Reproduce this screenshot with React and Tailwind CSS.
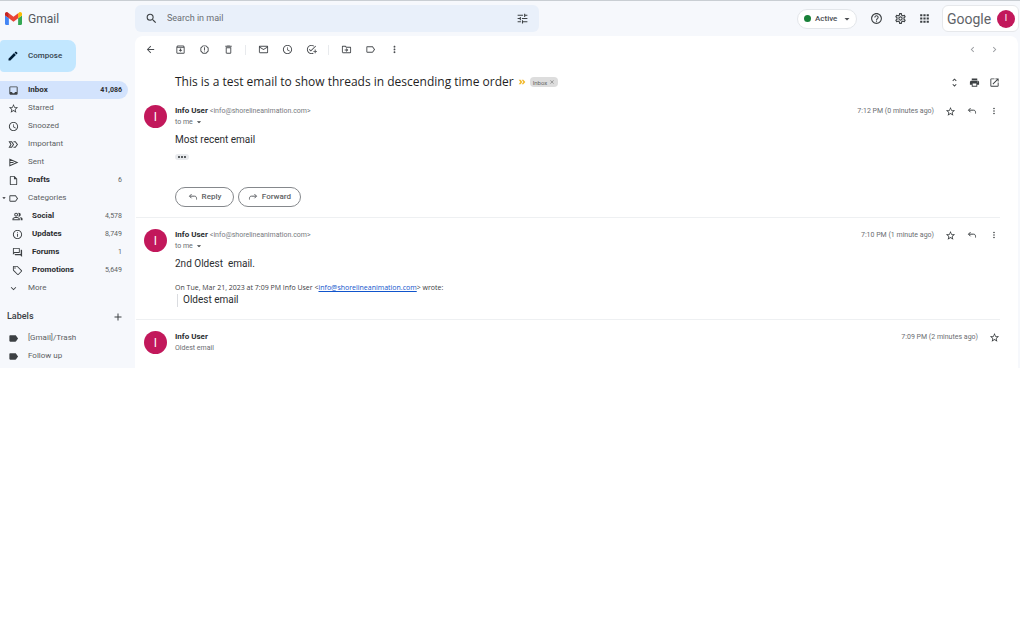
import React from "react";
import {
  MdAdd,
  MdApps,
  MdArrowBack,
  MdArrowDropDown,
  MdArrowRight,
  MdChevronLeft,
  MdChevronRight,
  MdClose,
  MdEdit,
  MdExpandMore,
  MdHelpOutline,
  MdInbox,
  MdInfoOutline,
  MdLabel,
  MdLabelOutline,
  MdMailOutline,
  MdMoreHoriz,
  MdMoreVert,
  MdOpenInNew,
  MdOutlineAddTask,
  MdOutlineArchive,
  MdOutlineDelete,
  MdOutlineDriveFileMove,
  MdOutlineForum,
  MdOutlineInsertDriveFile,
  MdOutlineLocalOffer,
  MdOutlinePeopleAlt,
  MdOutlineReport,
  MdOutlineSettings,
  MdPrint,
  MdSchedule,
  MdSearch,
  MdStarBorder,
  MdTune,
  MdUnfoldMore,
} from "react-icons/md";

const ImportantIcon = ({ className = "" }) => (
  <svg viewBox="0 0 24 24" className={className} fill="none" stroke="currentColor" strokeWidth="2.2">
    <path d="M3 6h5l4 6-4 6H3l3.500-6zM12 6h4l4.500 6-4.500 6h-4" />
  </svg>
);

const SentIcon = ({ className = "" }) => (
  <svg viewBox="0 0 24 24" className={className} fill="none" stroke="currentColor" strokeWidth="2.2">
    <path d="M4 5v14l16-7zM4 12h8" />
  </svg>
);

const ReplyArrow = ({ className = "" }) => (
  <svg viewBox="0 0 24 24" className={className} fill="none" stroke="currentColor" strokeWidth="2.4">
    <path d="M8.500 5 3.500 10l5 5M4 10h11.500c3.500 0 5 2.200 5 5.500V18" />
  </svg>
);

const folders = [
  { label: "Inbox", icon: MdInbox, count: "41,086", active: true, bold: true },
  { label: "Starred", icon: MdStarBorder },
  { label: "Snoozed", icon: MdSchedule },
  { label: "Important", icon: ImportantIcon },
  { label: "Sent", icon: SentIcon },
  { label: "Drafts", icon: MdOutlineInsertDriveFile, count: "6", bold: true },
  { label: "Categories", icon: MdLabelOutline, open: true },
  { label: "Social", icon: MdOutlinePeopleAlt, count: "4,578", bold: true, child: true },
  { label: "Updates", icon: MdInfoOutline, count: "8,749", bold: true, child: true },
  { label: "Forums", icon: MdOutlineForum, count: "1", bold: true, child: true },
  { label: "Promotions", icon: MdOutlineLocalOffer, count: "5,649", bold: true, child: true },
  { label: "More", icon: MdExpandMore },
];

const labels = ["[Gmail]/Trash", "Follow up"];

const toolGroups = [
  [
    ["Archive", MdOutlineArchive],
    ["Report spam", MdOutlineReport],
    ["Delete", MdOutlineDelete],
  ],
  [
    ["Mark as unread", MdMailOutline],
    ["Snooze", MdSchedule],
    ["Add to tasks", MdOutlineAddTask],
  ],
  [
    ["Move to", MdOutlineDriveFileMove],
    ["Labels", MdLabelOutline],
    ["More", MdMoreVert],
  ],
];

const GmailLogo = () => (
  <svg viewBox="52 42 88 66" className="h-[13px] w-[17px]" aria-hidden="true">
    <path fill="#4285f4" d="M58 108h14V74L52 59v43c0 3.320 2.690 6 6 6" />
    <path fill="#34a853" d="M120 108h14c3.320 0 6-2.690 6-6V59l-20 15" />
    <path fill="#fbbc04" d="M120 48v26l20-15v-8c0-7.420-8.470-11.650-14.400-7.200" />
    <path fill="#ea4335" d="M72 74V48l24 18 24-18v26L96 92" />
    <path fill="#c5221f" d="M52 51v8l20 15V48l-5.600-4.200C60.470 39.350 52 43.580 52 51" />
  </svg>
);

const IconButton = ({ label, icon: Icon, className = "w-6", size = "size-[11px]" }) => (
  <button type="button" aria-label={label} className={`flex h-5 shrink-0 items-center justify-center ${className}`}>
    <Icon className={size} />
  </button>
);

const Avatar = () => (
  <span className="flex size-[23px] shrink-0 items-center justify-center rounded-full bg-[#c2185b] text-xs text-white">
    I
  </span>
);

const Header = () => (
  <header className="flex h-9 items-center border-t border-[#c9ced3] pr-px">
    <a href="#" className="flex w-[135px] shrink-0 items-center gap-[6px] pl-[5px] text-xs text-[#55585c]">
      <GmailLogo />
      Gmail
    </a>
    <div className="flex h-[27px] w-[404px] items-center rounded-md bg-[#e9f0fa] pl-[10px] pr-[10px]">
      <MdSearch className="size-[13px]" />
      <input
        type="text"
        aria-label="Search in mail"
        placeholder="Search in mail"
        className="ml-[9px] min-w-0 flex-1 bg-transparent text-[9px] outline-none placeholder:text-[#6a6e73]"
      />
      <IconButton label="Search options" icon={MdTune} className="w-[13px]" size="size-[13px]" />
    </div>
    <div className="ml-auto flex items-center">
      <button
        type="button"
        className="mr-[7px] flex h-5 w-[60px] items-center gap-1 rounded-full border border-[#e3e6ea] bg-white pl-[6px] text-[8px] font-medium text-[#4a4d51]"
      >
        <span className="size-[7px] rounded-full bg-[#188038]" />
        Active
        <MdArrowDropDown className="size-3" />
      </button>
      <IconButton label="Support" icon={MdHelpOutline} size="size-[13px]" />
      <IconButton label="Settings" icon={MdOutlineSettings} size="size-[13px]" />
      <IconButton label="Google apps" icon={MdApps} size="size-[13px]" />
      <button
        type="button"
        aria-label="Google Account"
        className="ml-[6px] flex h-[27px] w-[77px] items-center justify-between rounded-md border border-[#e6e8eb] bg-white pl-1 pr-[3px]"
      >
        <span className="text-sm text-[#5f6368]">Google</span>
        <span className="flex size-[18px] items-center justify-center rounded-full bg-[#c2185b] text-[9px] text-white">I</span>
      </button>
    </div>
  </header>
);

const FolderLink = ({ label, icon: Icon, count, active, bold, child, open }) => (
  <a
    href="#"
    className={`relative flex h-[18px] items-center rounded-r-full pr-[6px] text-[8px] ${
      active ? "bg-[#d3e3fd]" : ""
    } ${bold ? "font-bold text-[#2b2d30]" : "text-[#5c5f63]"} ${child ? "pl-3" : "pl-2"}`}
  >
    {open && <MdArrowRight className="absolute left-0 size-2 rotate-90 text-[#202124]" />}
    <Icon className="size-[11px] text-[#3c4043]" />
    <span className="ml-[9px] flex-1">{label}</span>
    {count && <span className={active ? "text-[7px]" : "text-[7px] font-normal text-[#5c5f63]"}>{count}</span>}
  </a>
);

const Sidebar = () => (
  <aside className="w-[135px] shrink-0 pb-[3px] pr-[7px] text-[#3c4043]">
    <button
      type="button"
      className="mt-1 flex h-8 w-[76px] items-center gap-[9px] rounded-r-lg rounded-l-sm bg-[#c2e7ff] pl-[7px] text-[8px] font-medium text-[#35434d]"
    >
      <MdEdit className="size-3 text-[#001d35]" />
      Compose
    </button>
    <nav className="mt-[9px]">
      {folders.map((folder) => (
        <FolderLink key={folder.label} {...folder} />
      ))}
    </nav>
    <div className="mt-[10px] flex h-5 items-center justify-between pl-[7px]">
      <h2 className="text-[9px] font-medium">Labels</h2>
      <IconButton label="Create new label" icon={MdAdd} className="w-5" size="size-3" />
    </div>
    <nav className="mt-[2px]">
      {labels.map((label) => (
        <FolderLink key={label} label={label} icon={MdLabel} />
      ))}
    </nav>
  </aside>
);

const Toolbar = () => (
  <div className="flex h-[27px] items-center pl-[3px] pr-[13px] text-[#4a4d51]">
    <IconButton label="Back" icon={MdArrowBack} className="mr-[6px] w-6" />
    {toolGroups.map((group, i) => (
      <React.Fragment key={i}>
        {i > 0 && <span className="mx-[5px] h-[10px] w-px bg-[#e8eaed]" />}
        {group.map(([label, icon]) => (
          <IconButton key={label} label={label} icon={icon} />
        ))}
      </React.Fragment>
    ))}
    <div className="ml-auto flex text-[#9a9da1]">
      <IconButton label="Newer" icon={MdChevronLeft} className="w-[22px]" />
      <IconButton label="Older" icon={MdChevronRight} className="w-[22px]" />
    </div>
  </div>
);

const Subject = () => (
  <div className="flex h-[38px] items-center pl-10 pr-[14px] text-[#3c4043]">
    <h1 className="font-[Open_Sans,sans-serif] text-[12px] text-[#1f1f1f]">
      This is a test email to show threads in descending time order
    </h1>
    <svg viewBox="0 0 24 24" className="ml-1 size-2 fill-[#f2b92d]" aria-hidden="true">
      <path d="M2 5h6l5 7-5 7H2l5-7zM11 5h5l6 7-6 7h-5l5-7z" />
    </svg>
    <button type="button" className="ml-1 flex h-[10px] items-center gap-[2px] rounded-sm bg-[#dddddd] px-[3px] text-[6px] text-[#666666]">
      Inbox
      <MdClose className="size-[6px]" />
    </button>
    <div className="ml-auto flex">
      <IconButton label="Collapse all" icon={MdUnfoldMore} className="w-5" />
      <IconButton label="Print all" icon={MdPrint} className="w-5" />
      <IconButton label="In new window" icon={MdOpenInNew} className="w-5" />
    </div>
  </div>
);

const Message = ({ time, collapsed, preview, children }) => (
  <article className="flex pl-[9px] pt-[11px]">
    <Avatar />
    <div className="ml-2 min-w-0 flex-1">
      <div className="flex h-3 items-center pr-[13px]">
        <h3 className="text-[8px] font-bold text-[#2b2d30]">Info User</h3>
        {!collapsed && <span className="ml-[2px] text-[7px] text-[#777a7e]">&lt;info@shorelineanimation.com&gt;</span>}
        <span className="ml-auto mr-[5px] text-[7px] text-[#6a6d71]">{time}</span>
        <div className="flex text-[#3c4043]">
          <IconButton label="Star" icon={MdStarBorder} className="w-[22px]" />
          {!collapsed && (
            <>
              <IconButton label="Reply" icon={ReplyArrow} className="w-[22px]" size="size-[10px]" />
              <IconButton label="More" icon={MdMoreVert} className="w-[22px]" size="size-[10px]" />
            </>
          )}
        </div>
      </div>
      {collapsed ? (
        <p className="text-[7px] leading-[10px] text-[#6a6d71]">{preview}</p>
      ) : (
        <button type="button" className="flex h-[10px] items-center text-[7px] text-[#6a6d71]">
          to me
          <MdArrowDropDown className="ml-px size-[10px] text-[#3c4043]" />
        </button>
      )}
      {children}
    </div>
  </article>
);

const ActionButton = ({ label, flip }) => (
  <button
    type="button"
    className={`flex h-5 items-center justify-center gap-1 rounded-full border border-[#85888c] text-[8px] font-medium text-[#5c5f63] ${
      flip ? "w-[63px]" : "w-[59px]"
    }`}
  >
    <ReplyArrow className={`size-[10px] ${flip ? "-scale-x-100" : ""}`} />
    {label}
  </button>
);

const Thread = () => (
  <main className="mr-[2px] min-w-0 flex-1 rounded-t-lg bg-white">
    <Toolbar />
    <Subject />
    <div className="-mt-[7px]">
      <Message time="7:12 PM (0 minutes ago)">
        <p className="mt-[7px] text-[10px] leading-3 text-[#2b2d30]">Most recent email</p>
        <button
          type="button"
          aria-label="Show trimmed content"
          className="mt-2 flex h-[6px] w-[14px] items-center justify-center rounded-full bg-[#e8eaed]"
        >
          <MdMoreHoriz className="size-3" />
        </button>
        <div className="mt-[27px] flex gap-1 pb-[10px]">
          <ActionButton label="Reply" />
          <ActionButton label="Forward" flip />
        </div>
      </Message>
      <hr className="ml-px mr-[18px] border-[#eef0f2]" />
      <Message time="7:10 PM (1 minute ago)">
        <p className="mt-[7px] whitespace-pre text-[10px] leading-3 text-[#2b2d30]">2nd Oldest  email.</p>
        <p className="mt-[13px] font-[Open_Sans,sans-serif] text-[7px] leading-[10px] text-[#3c4043]">
          On Tue, Mar 21, 2023 at 7:09 PM Info User &lt;
          <a href="#" className="text-[#1155cc] underline">
            info@shorelineanimation.com
          </a>
          &gt; wrote:
        </p>
        <blockquote className="ml-[2px] mt-px border-l border-[#dadce0] pb-px pl-[5px] text-[10px] leading-3 text-[#2b2d30]">
          Oldest email
        </blockquote>
        <div className="h-3" />
      </Message>
      <hr className="ml-px mr-[18px] border-[#eef0f2]" />
      <Message time="7:09 PM (2 minutes ago)" preview="Oldest email" collapsed />
    </div>
  </main>
);

const App = () => (
  <div className="min-h-screen bg-white font-[Roboto,sans-serif] text-[#3c4043]">
    <div className="bg-[#f6f8fc]">
      <Header />
      <div className="flex">
        <Sidebar />
        <Thread />
      </div>
    </div>
  </div>
);

export default App;
